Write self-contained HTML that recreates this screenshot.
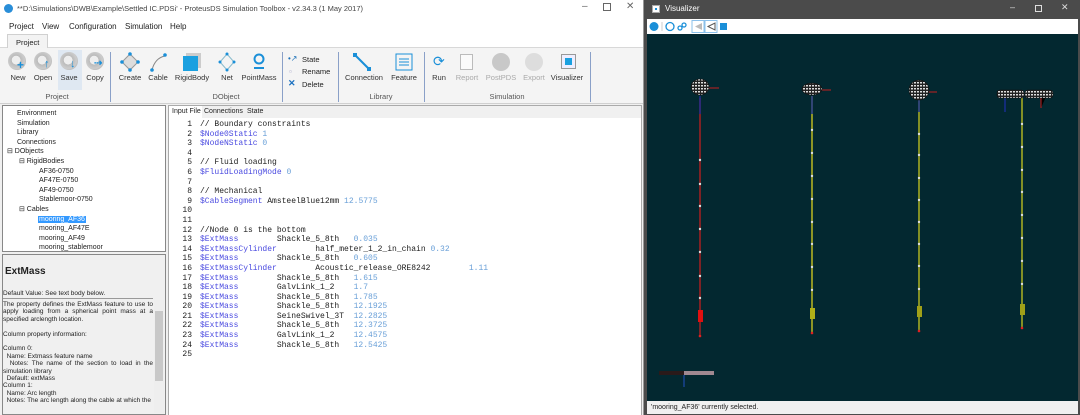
<!DOCTYPE html>
<html><head><meta charset="utf-8"><style>
*{margin:0;padding:0;box-sizing:border-box}
body{width:1080px;height:415px;overflow:hidden;background:#e8e8e8;font-family:"Liberation Sans",sans-serif;font-size:8px;color:#222;position:relative}
.a{position:absolute}
.code{font-family:"Liberation Mono",monospace;font-size:8px;line-height:9.6px;white-space:pre}
.k{color:#4a4ae0}.n{color:#6aa0d8}
.lbl{position:absolute;top:73px;font-size:7.5px;color:#333;transform:translateX(-50%);white-space:nowrap}
.gl{position:absolute;top:92px;font-size:7.5px;color:#555;transform:translateX(-50%)}
.sep{position:absolute;top:52px;width:1px;height:50px;background:#8aa0c8}
.ci{position:absolute;width:18px;height:18px;border-radius:50%;background:radial-gradient(circle at 45% 45%,#eee 30%,#bbb 32%,#ccc 60%,#999 100%)}
</style></head><body>
<div class="a" style="left:0;top:0;width:644px;height:415px;background:#f0f0f0;border-right:1px solid #999">
 <div class="a" style="left:0;top:0;width:643px;height:17px;background:#fff"></div>
 <div class="a" style="left:4px;top:4px;width:9px;height:9px;border-radius:50%;background:#2a8ed8"></div>
 <div class="a" style="left:17px;top:4px;font-size:7.5px;color:#444">**D:\Simulations\DWB\Example\Settled IC.PDSi' - ProteusDS Simulation Toolbox - v2.34.3 (1 May 2017)</div>
 <div class="a" style="left:582px;top:1px;font-size:10px;color:#666">–</div>
 <div class="a" style="left:603px;top:3px;width:8px;height:8px;border:1px solid #666"></div>
 <div class="a" style="left:626px;top:1px;font-size:10px;color:#666">✕</div>
 <div class="a" style="left:0;top:17px;width:643px;height:16px;background:#fff"></div>
 <div class="a" style="left:9px;top:22px;font-size:8px">Project</div>
 <div class="a" style="left:42px;top:22px;font-size:8px">View</div>
 <div class="a" style="left:69px;top:22px;font-size:8px">Configuration</div>
 <div class="a" style="left:125px;top:22px;font-size:8px">Simulation</div>
 <div class="a" style="left:170px;top:22px;font-size:8px">Help</div>
 <div class="a" style="left:0;top:33px;width:643px;height:15px;background:#fff;border-bottom:1px solid #d8d8d8"></div>
 <div class="a" style="left:7px;top:34px;width:41px;height:15px;background:#f3f3f3;border:1px solid #d0d0d0;border-bottom:none;font-size:7.5px;padding:3px 0 0 8px">Project</div>
 <div class="a" style="left:0;top:48px;width:643px;height:56px;background:#f4f4f4;border-bottom:1px solid #d0d0d0"></div>
 <div class="a" style="left:58px;top:50px;width:24px;height:40px;background:#dfe8f2"></div>
 <div class="ci" style="left:8px;top:52px"></div><div class="ci" style="left:34px;top:52px"></div><div class="ci" style="left:60px;top:52px"></div><div class="ci" style="left:86px;top:52px"></div>
 <div class="a" style="left:17px;top:58px;color:#1a8fd8;font-size:12px;font-weight:bold">+</div>
 <div class="a" style="left:44px;top:58px;color:#1a8fd8;font-size:11px;font-weight:bold">↑</div>
 <div class="a" style="left:70px;top:58px;color:#1a8fd8;font-size:11px;font-weight:bold">↓</div>
 <div class="a" style="left:94px;top:58px;color:#1a8fd8;font-size:10px;font-weight:bold">⇢</div>
 <div class="lbl" style="left:18px">New</div><div class="lbl" style="left:43px">Open</div><div class="lbl" style="left:69px">Save</div><div class="lbl" style="left:95px">Copy</div>
 <div class="gl" style="left:57px">Project</div>
 <div class="sep" style="left:110px"></div>
 <svg class="a" style="left:115px;top:50px" width="180" height="24">
  <path d="M15 4 L23 12 L15 20 L7 12Z" fill="#ddd" stroke="#999"/><g fill="#1a8fd8"><circle cx="15" cy="4" r="1.8"/><circle cx="23" cy="12" r="1.8"/><circle cx="15" cy="20" r="1.8"/><circle cx="7" cy="12" r="1.8"/></g>
  <path d="M37 20 Q40 8 50 6" fill="none" stroke="#888"/><circle cx="37" cy="20" r="1.8" fill="#1a8fd8"/><circle cx="50" cy="5" r="1.8" fill="#1a8fd8"/>
  <rect x="71" y="3" width="15" height="15" fill="#ccc"/><rect x="68" y="6" width="15" height="15" fill="#1aa0e0"/>
  <path d="M112 4 L119 12 L112 20 L105 12Z" fill="none" stroke="#8bc"/><g fill="#1a8fd8"><circle cx="112" cy="4" r="1.5"/><circle cx="119" cy="12" r="1.5"/><circle cx="112" cy="20" r="1.5"/><circle cx="105" cy="12" r="1.5"/></g>
  <circle cx="144" cy="9" r="4.5" fill="none" stroke="#1a8fd8" stroke-width="2"/><path d="M139 18 H149" stroke="#1a8fd8" stroke-width="2"/>
 </svg>
 <div class="lbl" style="left:130px">Create</div><div class="lbl" style="left:158px">Cable</div><div class="lbl" style="left:192px">RigidBody</div><div class="lbl" style="left:227px">Net</div><div class="lbl" style="left:259px">PointMass</div>
 <div class="sep" style="left:282px"></div>
 <div class="a" style="left:288px;top:54px;color:#1a6fb8;font-size:8px">•↗</div><div class="a" style="left:302px;top:55px;font-size:7.5px">State</div>
 <div class="a" style="left:289px;top:67px;color:#aac;font-size:8px">▫</div><div class="a" style="left:302px;top:67px;font-size:7.5px">Rename</div>
 <div class="a" style="left:288px;top:78px;color:#1a70c0;font-size:9px;font-weight:bold">✕</div><div class="a" style="left:302px;top:80px;font-size:7.5px">Delete</div>
 <div class="gl" style="left:226px">DObject</div>
 <div class="sep" style="left:338px"></div>
 <svg class="a" style="left:352px;top:52px" width="70" height="22">
  <path d="M3 3 L17 17" stroke="#1a8fd8" stroke-width="2"/><rect x="1" y="1" width="4" height="4" fill="#1a8fd8"/><rect x="15" y="15" width="4" height="4" fill="#1a8fd8"/>
  <rect x="44" y="2" width="16" height="16" fill="none" stroke="#1a8fd8"/><path d="M47 7H57M47 10H57M47 13H57" stroke="#1a8fd8"/>
 </svg>
 <div class="lbl" style="left:364px">Connection</div><div class="lbl" style="left:404px">Feature</div>
 <div class="gl" style="left:381px">Library</div>
 <div class="sep" style="left:424px"></div>
 <div class="a" style="left:433px;top:53px;color:#1a8fd8;font-size:14px">⟳</div>
 <div class="a" style="left:460px;top:54px;width:13px;height:16px;border:1px solid #bbb;background:#fafafa"></div>
 <div class="ci" style="left:492px;top:53px;background:#c8c8c8"></div>
 <div class="ci" style="left:525px;top:53px;background:#ddd"></div>
 <div class="a" style="left:561px;top:54px;width:15px;height:15px;border:1px solid #999;background:#eef"><div class="a" style="left:3px;top:3px;width:7px;height:7px;background:#1aa0e0"></div></div>
 <div class="lbl" style="left:439px">Run</div><div class="lbl" style="left:467px;color:#aaa">Report</div><div class="lbl" style="left:501px;color:#aaa">PostPDS</div><div class="lbl" style="left:534px;color:#aaa">Export</div><div class="lbl" style="left:567px">Visualizer</div>
 <div class="gl" style="left:507px">Simulation</div>
 <div class="sep" style="left:590px"></div>
 <div class="a" style="left:2px;top:105px;width:164px;height:147px;background:#fff;border:1px solid #888"></div>
 <div class="a" style="left:3px;top:109px;font-size:7px;line-height:9.6px;color:#222">
  <div style="padding-left:14px">Environment</div><div style="padding-left:14px">Simulation</div><div style="padding-left:14px">Library</div><div style="padding-left:14px">Connections</div>
  <div style="padding-left:4px">⊟ DObjects</div><div style="padding-left:16px">⊟ RigidBodies</div>
  <div style="padding-left:36px">AF36-0750</div><div style="padding-left:36px">AF47E-0750</div><div style="padding-left:36px">AF49-0750</div><div style="padding-left:36px">Stablemoor-0750</div>
  <div style="padding-left:16px">⊟ Cables</div>
  <div style="padding-left:35px"><span style="background:#3399ff;color:#fff;padding:0 1px">mooring_AF36</span></div>
  <div style="padding-left:36px">mooring_AF47E</div><div style="padding-left:36px">mooring_AF49</div><div style="padding-left:36px">mooring_stablemoor</div>
 </div>
 <div class="a" style="left:2px;top:254px;width:164px;height:161px;background:#f0f0f0;border:1px solid #888"></div>
 <div class="a" style="left:5px;top:266px;font-size:10px;font-weight:bold">ExtMass</div>
 <div class="a" style="left:3px;top:290px;font-size:6.5px">Default Value: See text body below.</div>
 <div class="a" style="left:3px;top:298px;width:150px;height:1px;background:#999"></div>
 <div class="a" style="left:3px;top:301px;width:150px;font-size:6.5px;line-height:7.4px;text-align:justify">The property defines the ExtMass feature to use to apply loading from a spherical point mass at a specified arclength location.<br><br>Column property information:<br><br>Column 0:<br>&nbsp;&nbsp;Name: Extmass feature name<br>&nbsp;&nbsp;Notes: The name of the section to load in the simulation library<br>&nbsp;&nbsp;Default: extMass<br>Column 1:<br>&nbsp;&nbsp;Name: Arc length<br>&nbsp;&nbsp;Notes: The arc length along the cable at which the</div>
 <div class="a" style="left:154px;top:300px;width:10px;height:113px;background:#eee"></div>
 <div class="a" style="left:155px;top:311px;width:8px;height:70px;background:#c8c8c8"></div>
 <div class="a" style="left:168px;top:105px;width:474px;height:310px;background:#f0f0f0;border:1px solid #aaa"></div>
 <div class="a" style="left:169px;top:106px;width:33px;height:12px;background:#fff;font-size:7px;padding:2px 0 0 3px">Input File</div>
 <div class="a" style="left:204px;top:108px;font-size:7px">Connections</div>
 <div class="a" style="left:247px;top:108px;font-size:7px">State</div>
 <div class="a" style="left:169px;top:118px;width:472px;height:297px;background:#fff"></div>
 <div class="a code" style="left:170px;top:120px;width:22px;text-align:right;color:#222">1
2
3
4
5
6
7
8
9
10
11
12
13
14
15
16
17
18
19
20
21
22
23
24
25</div>
 <div class="a code" style="left:200px;top:120px;color:#222">// Boundary constraints
<span class="k">$Node0Static</span> <span class="n">1</span>
<span class="k">$NodeNStatic</span> <span class="n">0</span>

// Fluid loading
<span class="k">$FluidLoadingMode</span> <span class="n">0</span>

// Mechanical
<span class="k">$CableSegment</span> AmsteelBlue12mm <span class="n">12.5775</span>


//Node 0 is the bottom
<span class="k">$ExtMass</span>        Shackle_5_8th   <span class="n">0.035</span>
<span class="k">$ExtMassCylinder</span>        half_meter_1_2_in_chain <span class="n">0.32</span>
<span class="k">$ExtMass</span>        Shackle_5_8th   <span class="n">0.605</span>
<span class="k">$ExtMassCylinder</span>        Acoustic_release_ORE8242        <span class="n">1.11</span>
<span class="k">$ExtMass</span>        Shackle_5_8th   <span class="n">1.615</span>
<span class="k">$ExtMass</span>        GalvLink_1_2    <span class="n">1.7</span>
<span class="k">$ExtMass</span>        Shackle_5_8th   <span class="n">1.785</span>
<span class="k">$ExtMass</span>        Shackle_5_8th   <span class="n">12.1925</span>
<span class="k">$ExtMass</span>        SeineSwivel_3T  <span class="n">12.2825</span>
<span class="k">$ExtMass</span>        Shackle_5_8th   <span class="n">12.3725</span>
<span class="k">$ExtMass</span>        GalvLink_1_2    <span class="n">12.4575</span>
<span class="k">$ExtMass</span>        Shackle_5_8th   <span class="n">12.5425</span>
</div>
</div>
<div class="a" style="left:644px;top:0;width:436px;height:415px;background:#4b4b4b"></div>
<div class="a" style="left:652px;top:5px;width:8px;height:8px;background:#fff;border:1px solid #aaa"><div class="a" style="left:2px;top:2px;width:2px;height:2px;background:#1a8fd8"></div></div>
<div class="a" style="left:665px;top:4px;font-size:8px;color:#fff">Visualizer</div>
<div class="a" style="left:1010px;top:2px;font-size:9px;color:#ddd">–</div>
<div class="a" style="left:1035px;top:5px;width:7px;height:7px;border:1px solid #ddd"></div>
<div class="a" style="left:1061px;top:2px;font-size:9px;color:#ddd">✕</div>
<div class="a" style="left:647px;top:19px;width:431px;height:15px;background:#fff"></div>
<svg class="a" style="left:647px;top:19px" width="100" height="15">
 <circle cx="7" cy="7.5" r="4.5" fill="#1a8fd8"/><path d="M15 3V12" stroke="#ccc"/>
 <circle cx="23" cy="7.5" r="4" fill="none" stroke="#1a8fd8" stroke-width="1.3"/>
 <circle cx="33" cy="9" r="2" fill="none" stroke="#1a8fd8" stroke-width="1.3"/><circle cx="37" cy="6" r="2" fill="none" stroke="#1a8fd8" stroke-width="1.3"/>
 <rect x="45" y="1.5" width="12" height="12" fill="none" stroke="#8bc0ea"/><path d="M48 7.5L55 4V11Z" fill="#bbb"/>
 <rect x="58" y="1.5" width="12" height="12" fill="none" stroke="#8bc0ea"/><path d="M61 7.5L68 4V11Z" fill="none" stroke="#555"/>
 <rect x="73" y="4" width="7" height="7" fill="#1a8fd8"/>
</svg>
<svg class="a" style="left:647px;top:34px" width="431" height="367">
 <defs><pattern id="sp" width="3" height="3" patternUnits="userSpaceOnUse"><rect width="3" height="3" fill="#222"/><rect width="2" height="1.5" fill="#ddd"/></pattern></defs>
 <rect width="431" height="367" fill="#032830"/>
 <g stroke-width="1.3">
  <path d="M53 64V302" stroke="#c02020"/><path d="M165 62V299" stroke="#d8d020"/><path d="M272 62V297" stroke="#c8c820"/><path d="M375 62V294" stroke="#c8c820"/>
 </g>
 <g stroke="#2030c0"><path d="M53 62V80"/><path d="M165 62V80"/><path d="M272 62V78"/><path d="M358 62V78"/></g>
 <g stroke="#c02020"><path d="M62 54H72"/><path d="M175 56H184"/><path d="M281 58H290"/><path d="M401 58H394V74"/></g>
 <rect x="51" y="276" width="5" height="12" fill="#e01010"/>
 <rect x="163" y="274" width="5" height="11" fill="#b0b018"/><rect x="270" y="272" width="5" height="11" fill="#a0a018"/><rect x="373" y="270" width="5" height="11" fill="#a0a018"/>
 <g fill="#ddd">
  <circle cx="53" cy="126" r="1.2"/><circle cx="53" cy="150" r="1.2"/><circle cx="53" cy="172" r="1.2"/><circle cx="53" cy="195" r="1.2"/><circle cx="53" cy="218" r="1.2"/><circle cx="53" cy="242" r="1.2"/><circle cx="53" cy="264" r="1.2"/>
  <circle cx="165" cy="96" r="1.2"/><circle cx="165" cy="119" r="1.2"/><circle cx="165" cy="142" r="1.2"/><circle cx="165" cy="165" r="1.2"/><circle cx="165" cy="188" r="1.2"/><circle cx="165" cy="210" r="1.2"/><circle cx="165" cy="233" r="1.2"/><circle cx="165" cy="256" r="1.2"/>
  <circle cx="272" cy="100" r="1.2"/><circle cx="272" cy="121" r="1.2"/><circle cx="272" cy="144" r="1.2"/><circle cx="272" cy="166" r="1.2"/><circle cx="272" cy="188" r="1.2"/><circle cx="272" cy="210" r="1.2"/><circle cx="272" cy="232" r="1.2"/><circle cx="272" cy="255" r="1.2"/>
  <circle cx="375" cy="90" r="1.2"/><circle cx="375" cy="113" r="1.2"/><circle cx="375" cy="136" r="1.2"/><circle cx="375" cy="158" r="1.2"/><circle cx="375" cy="181" r="1.2"/><circle cx="375" cy="204" r="1.2"/><circle cx="375" cy="227" r="1.2"/><circle cx="375" cy="250" r="1.2"/>
 </g>
 <g fill="#e02020"><circle cx="53" cy="302" r="1.3"/><circle cx="165" cy="299" r="1.3"/><circle cx="272" cy="297" r="1.3"/><circle cx="375" cy="294" r="1.3"/></g>
 <g fill="url(#sp)" stroke="#111" stroke-width="0.6">
  <ellipse cx="53" cy="53" rx="9" ry="8"/><ellipse cx="165" cy="55" rx="10" ry="6"/><ellipse cx="272" cy="56" rx="10" ry="10"/>
  <rect x="350" y="56" width="27" height="8" rx="3"/><rect x="378" y="56" width="28" height="8" rx="3"/>
 </g>
 <rect x="12" y="337" width="55" height="4" fill="#a08890"/><rect x="12" y="337" width="25" height="4" fill="#2a1a1a"/>
 <path d="M37 341V353" stroke="#2050c0"/>
</svg>
<div class="a" style="left:647px;top:401px;width:431px;height:13px;background:#f0f0f0;font-size:7px;padding:3px 0 0 4px">'mooring_AF36' currently selected.</div>
</body></html>
